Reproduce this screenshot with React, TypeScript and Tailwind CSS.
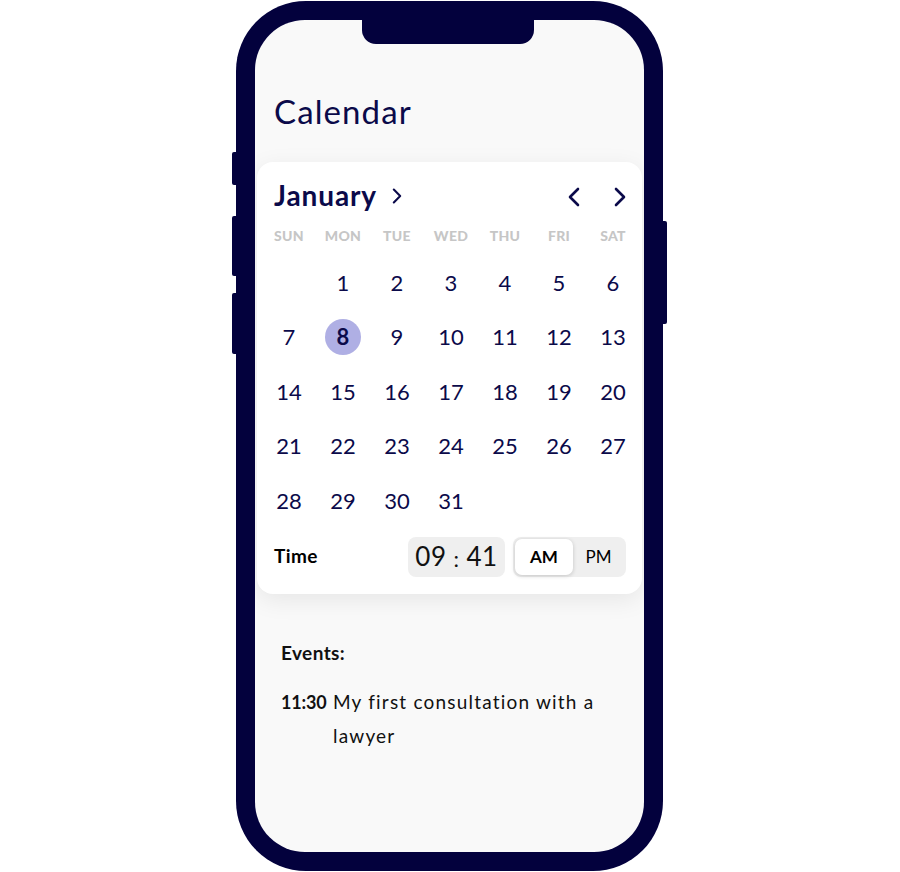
const days = ["SUN", "MON", "TUE", "WED", "THU", "FRI", "SAT"];

// January starts on Monday
const cells: (number | null)[] = [null, ...Array.from({ length: 31 }, (_, i) => i + 1)];

const Chevron = ({ dir, className }: { dir: "left" | "right"; className?: string }) => (
  <svg viewBox="0 0 12 20" className={className} fill="none" stroke="currentColor" strokeWidth={2.6} strokeLinecap="round" strokeLinejoin="round">
    {dir === "right" ? <path d="M2 2l8 8-8 8" /> : <path d="M10 2l-8 8 8 8" />}
  </svg>
);

export default function App() {
  const selected = 8;

  return (
    <div className="w-[900px] h-[872px] bg-white pt-px pl-[236px]" style={{ fontFamily: "Lato, 'Noto Sans', sans-serif" }}>
      <div className="relative w-[427px] h-[870px] rounded-[70px] bg-[#03013d] p-[19px]">
        {/* side buttons */}
        <div className="absolute -left-[4px] top-[151px] w-[6px] h-[33px] rounded-l-[2px] bg-[#03013d]" />
        <div className="absolute -left-[4px] top-[215px] w-[6px] h-[60px] rounded-l-[2px] bg-[#03013d]" />
        <div className="absolute -left-[4px] top-[292px] w-[6px] h-[61px] rounded-l-[2px] bg-[#03013d]" />
        <div className="absolute -right-[4px] top-[220px] w-[6px] h-[103px] rounded-r-[2px] bg-[#03013d]" />

        <div className="relative h-full rounded-[50px] bg-[#f9f9f9] overflow-hidden">
          {/* notch */}
          <div className="absolute left-[107px] top-0 w-[172px] h-[24px] rounded-b-[14px] bg-[#03013d]" />

          <div className="pt-[71px] px-[2px]">
            <h1 className="pl-[17px] text-[33px] leading-[40px] text-[#0b0a4a] tracking-[1.1px]">Calendar</h1>

            <div className="mt-[31px] bg-white rounded-[16px] shadow-[0_6px_24px_rgba(0,0,0,0.08)] pt-[17px] pb-[17px]">
              <div className="flex items-center justify-between pl-[17px] pr-[16px] h-[32px]">
                <div className="flex items-center gap-[15px]">
                  <span className="text-[28px] leading-[32px] font-bold text-[#0b0a4a] tracking-[0.9px]">January</span>
                  <Chevron dir="right" className="w-[10px] h-[16px] text-[#0b0a4a] mt-[2px]" />
                </div>
                <div className="flex items-center gap-[34px] mt-[4px]">
                  <Chevron dir="left" className="w-[12px] h-[20px] text-[#0b0a4a]" />
                  <Chevron dir="right" className="w-[12px] h-[20px] text-[#0b0a4a]" />
                </div>
              </div>

              <div className="mt-[17px] ml-[5px] w-[378px] grid grid-cols-7">
                {days.map((d) => (
                  <div key={d} className="text-center text-[14px] leading-[16px] font-black text-[#c6c6c6] tracking-[0.3px]">
                    {d}
                  </div>
                ))}
              </div>

              <div className="mt-[11px] ml-[5px] w-[378px] grid grid-cols-7 auto-rows-[54.5px]">
                {cells.map((n, i) => (
                  <div key={i} className="flex items-center justify-center">
                    {n === selected ? (
                      <div className="w-[36px] h-[36px] rounded-full bg-[#afafe4] flex items-center justify-center text-[22px] font-bold text-[#0b0a4a]">
                        {n}
                      </div>
                    ) : (
                      <span className="text-[22px] text-[#0b0a4a]">{n ?? ""}</span>
                    )}
                  </div>
                ))}
              </div>

              <div className="mt-[9px] flex items-center pl-[17px] pr-[16px] h-[40px]">
                <span className="text-[19px] font-bold text-black tracking-[0.4px]">Time</span>
                <div className="ml-auto flex items-center gap-[8px]">
                  <div className="w-[97px] h-[40px] rounded-[8px] bg-[#efefef] flex items-center justify-center text-[26px] text-[#111] gap-[7px] tracking-[0.5px]">
                    <span>09</span>
                    <span className="text-[22px] mt-[3px]">:</span>
                    <span>41</span>
                  </div>
                  <div className="w-[113px] h-[40px] rounded-[8px] bg-[#efefef] p-[2px] flex items-center">
                    <div className="w-[58px] h-[36px] rounded-[7px] bg-white shadow-[0_1px_4px_rgba(0,0,0,0.18)] flex items-center justify-center text-[17px] font-bold text-black">
                      AM
                    </div>
                    <div className="flex-1 flex items-center justify-center text-[17px] text-black">PM</div>
                  </div>
                </div>
              </div>
            </div>
          </div>

          <div className="px-[26px] mt-[47px]">
            <div className="text-[19px] leading-[24px] font-bold text-[#111] tracking-[0.4px]">Events:</div>
            <div className="mt-[20px] flex text-[19px] leading-[34px] text-[#111]">
              <span className="font-bold w-[52px] shrink-0 text-[18px] tracking-[-0.2px]">11:30</span>
              <span className="w-[290px] tracking-[1.2px]">My first consultation with a lawyer</span>
            </div>
          </div>
        </div>
      </div>
    </div>
  );
}
